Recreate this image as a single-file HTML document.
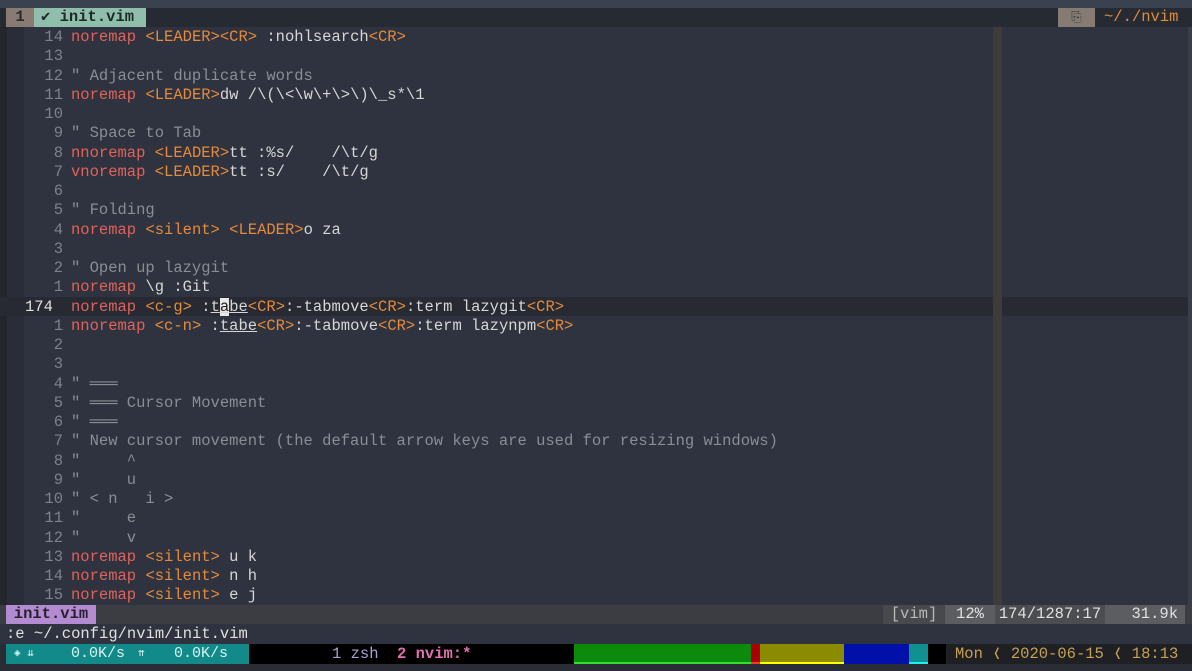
<!DOCTYPE html>
<html><head><meta charset="utf-8"><style>
*{margin:0;padding:0;box-sizing:border-box}
body{width:1192px;height:671px;overflow:hidden;background:#2f333f;font-family:"Liberation Mono","DejaVu Sans Mono",monospace;font-size:15.5px;position:relative;color:#d6d6d6}
.abs{position:absolute}
.row{position:absolute;left:0;height:19.25px;line-height:20.5px;white-space:pre;width:993px}
.n{position:absolute;right:930px;color:#7d818b;text-align:right}
.t{position:absolute;left:71px}
.r{color:#e0625a}.o{color:#e58a3a}.c{color:#8a8d94}.w{color:#d8d8d8}
.u{text-decoration:underline}
</style></head><body>
<div class="abs" style="left:0;top:0;width:1192px;height:8px;background:#3a4250"></div>
<div class="abs" style="left:0;top:8px;width:1192px;height:19px;background:#262a32"></div>
<div class="abs" style="left:6px;top:8px;width:28px;height:19px;background:#8a7a74;color:#2a2a2a;line-height:19px;text-align:center;font-weight:bold">1</div>
<div class="abs" style="left:34px;top:8px;width:112px;height:19px;background:#8fbfac;color:#1e2a26;line-height:19px;padding-left:7px;font-weight:bold">&#x2714;&#xFE0E; init.vim</div>
<div class="abs" style="left:1058px;top:8px;width:37px;height:19px;background:#857b73;color:#333;line-height:19px;text-align:center;font-size:13px">&#x2398;</div>
<div class="abs" style="left:1104px;top:8px;height:19px;line-height:19px;color:#e08a3c">~/./nvim</div>
<div class="abs" style="left:0;top:27px;width:7px;height:578px;background:#23262d"></div>
<div class="abs" style="left:7px;top:27px;width:17px;height:578px;background:#2a2d37"></div>
<div class="abs" style="left:0;top:297px;width:1188px;height:19px;background:#272a33"></div>
<div class="abs" style="left:993px;top:27px;width:9px;height:578px;background:#3f3b3a"></div>
<div class="abs" style="left:1188px;top:27px;width:4px;height:578px;background:#3a3e49"></div>

<div class="row" style="top:27px"><span class="n">14</span><span class="t"><span class="r">noremap</span> <span class="o">&lt;LEADER&gt;&lt;CR&gt;</span> :nohlsearch<span class="o">&lt;CR&gt;</span></span></div>
<div class="row" style="top:46.25px"><span class="n">13</span></div>
<div class="row" style="top:65.5px"><span class="n">12</span><span class="t c">" Adjacent duplicate words</span></div>
<div class="row" style="top:84.75px"><span class="n">11</span><span class="t"><span class="r">noremap</span> <span class="o">&lt;LEADER&gt;</span>dw /\(\&lt;\w\+\&gt;\)\_s*\1</span></div>
<div class="row" style="top:104px"><span class="n">10</span></div>
<div class="row" style="top:123.25px"><span class="n">9</span><span class="t c">" Space to Tab</span></div>
<div class="row" style="top:142.5px"><span class="n">8</span><span class="t"><span class="r">nnoremap</span> <span class="o">&lt;LEADER&gt;</span>tt :%s/    /\t/g</span></div>
<div class="row" style="top:161.75px"><span class="n">7</span><span class="t"><span class="r">vnoremap</span> <span class="o">&lt;LEADER&gt;</span>tt :s/    /\t/g</span></div>
<div class="row" style="top:181px"><span class="n">6</span></div>
<div class="row" style="top:200.25px"><span class="n">5</span><span class="t c">" Folding</span></div>
<div class="row" style="top:219.5px"><span class="n">4</span><span class="t"><span class="r">noremap</span> <span class="o">&lt;silent&gt;</span> <span class="o">&lt;LEADER&gt;</span>o za</span></div>
<div class="row" style="top:238.75px"><span class="n">3</span></div>
<div class="row" style="top:258px"><span class="n">2</span><span class="t c">" Open up lazygit</span></div>
<div class="row" style="top:277.25px"><span class="n">1</span><span class="t"><span class="r">noremap</span> \g :Git</span></div>
<div class="row" style="top:296.5px"><span class="abs" style="left:25px;color:#e0e0e0">174</span><span class="t"><span class="r">noremap</span> <span class="o">&lt;c-g&gt;</span> :<span class="u">t<span style="background:#e8e8e8;color:#222">a</span>be</span><span class="o">&lt;CR&gt;</span>:-tabmove<span class="o">&lt;CR&gt;</span>:term lazygit<span class="o">&lt;CR&gt;</span></span></div>
<div class="row" style="top:315.75px"><span class="n">1</span><span class="t"><span class="r">nnoremap</span> <span class="o">&lt;c-n&gt;</span> :<span class="u">tabe</span><span class="o">&lt;CR&gt;</span>:-tabmove<span class="o">&lt;CR&gt;</span>:term lazynpm<span class="o">&lt;CR&gt;</span></span></div>
<div class="row" style="top:335px"><span class="n">2</span></div>
<div class="row" style="top:354.25px"><span class="n">3</span></div>
<div class="row" style="top:373.5px"><span class="n">4</span><span class="t c">" &#x2550;&#x2550;&#x2550;</span></div>
<div class="row" style="top:392.75px"><span class="n">5</span><span class="t c">" &#x2550;&#x2550;&#x2550; Cursor Movement</span></div>
<div class="row" style="top:412px"><span class="n">6</span><span class="t c">" &#x2550;&#x2550;&#x2550;</span></div>
<div class="row" style="top:431.25px"><span class="n">7</span><span class="t c">" New cursor movement (the default arrow keys are used for resizing windows)</span></div>
<div class="row" style="top:450.5px"><span class="n">8</span><span class="t c">"     ^</span></div>
<div class="row" style="top:469.75px"><span class="n">9</span><span class="t c">"     u</span></div>
<div class="row" style="top:489px"><span class="n">10</span><span class="t c">" &lt; n   i &gt;</span></div>
<div class="row" style="top:508.25px"><span class="n">11</span><span class="t c">"     e</span></div>
<div class="row" style="top:527.5px"><span class="n">12</span><span class="t c">"     v</span></div>
<div class="row" style="top:546.75px"><span class="n">13</span><span class="t"><span class="r">noremap</span> <span class="o">&lt;silent&gt;</span> u k</span></div>
<div class="row" style="top:566px"><span class="n">14</span><span class="t"><span class="r">noremap</span> <span class="o">&lt;silent&gt;</span> n h</span></div>
<div class="row" style="top:585.25px"><span class="n">15</span><span class="t"><span class="r">noremap</span> <span class="o">&lt;silent&gt;</span> e j</span></div>

<div class="abs" style="left:0;top:605px;width:1192px;height:19px;background:#3b3d42"></div>
<div class="abs" style="left:6px;top:605px;width:90px;height:19px;background:#b38bd0;color:#2a2030;line-height:19px;text-align:center;font-weight:bold">init.vim</div>
<div class="abs" style="left:883px;top:605px;width:62px;height:19px;background:#48494c;color:#b8b8b8;line-height:19px;text-align:center">[vim]</div>
<div class="abs" style="left:945px;top:605px;width:50px;height:19px;background:#5c5d60;color:#e0e0e0;line-height:19px;text-align:center">12%</div>
<div class="abs" style="left:995px;top:605px;width:110px;height:19px;background:#4c4d50;color:#e0e0e0;line-height:19px;text-align:center">174/1287:17</div>
<div class="abs" style="left:1105px;top:605px;width:80px;height:19px;background:#5c5d60;color:#e0e0e0;line-height:19px;text-align:right;padding-right:7px">31.9k</div>
<div class="abs" style="left:0;top:624px;width:1192px;height:20px;background:#2f333f;line-height:21px;padding-left:6px;color:#e0e0e0">:e ~/.config/nvim/init.vim</div>

<div class="abs" style="left:0;top:644px;width:1192px;height:27px;background:#2a2d35"></div>
<div class="abs" style="left:6px;top:644px;width:243px;height:20px;background:#138a8a;color:#d8f0f0;line-height:20px;white-space:pre;font-size:15px"><span style="position:absolute;left:8px;font-size:11px">&#x25C8; &#x21CA;</span><span style="position:absolute;left:65px">0.0K/s</span><span style="position:absolute;left:132px;font-size:11px">&#x21C8;</span><span style="position:absolute;left:168px">0.0K/s</span></div>
<div class="abs" style="left:249px;top:644px;width:310px;height:20px;background:#000;line-height:20px;white-space:pre"><span style="position:absolute;left:83px;color:#a8a0d8">1 zsh</span><span style="position:absolute;left:148px;color:#e070b0;font-weight:bold">2 nvim:*</span></div>
<div class="abs" style="left:559px;top:644px;width:15px;height:20px;background:#000"></div>
<div class="abs" style="left:574px;top:644px;width:177px;height:20px;background:#0b8a0b;border-bottom:2px solid #2fe02f"></div>
<div class="abs" style="left:751px;top:644px;width:9px;height:20px;background:#a00;border-bottom:2px solid #f33"></div>
<div class="abs" style="left:760px;top:644px;width:84px;height:20px;background:#8b8b00;border-bottom:2px solid #ff0"></div>
<div class="abs" style="left:844px;top:644px;width:65px;height:20px;background:#0010a8"></div>
<div class="abs" style="left:909px;top:644px;width:19px;height:20px;background:#109090;border-bottom:2px solid #2ee"></div>
<div class="abs" style="left:928px;top:644px;width:18px;height:20px;background:#000"></div>
<div class="abs" style="left:946px;top:644px;width:246px;height:20px;background:#1f2024;color:#c8a050;line-height:20px;padding-left:9px;white-space:pre">Mon &#x276C; 2020-06-15 &#x276C; 18:13</div>
</body></html>
